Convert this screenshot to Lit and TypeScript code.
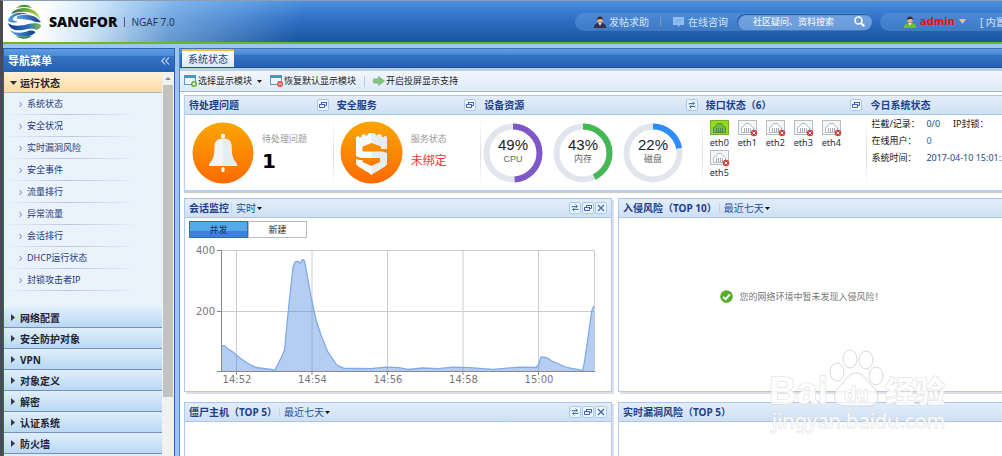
import { LitElement, html, css, svg, nothing } from "lit";
import { customElement, property, state } from "lit/decorators.js";
import { classMap } from "lit/directives/class-map.js";

const FONT = css`"Noto Sans", "Noto Sans CJK SC", sans-serif`;

const controls = css`
  * { box-sizing: border-box; }
  button, input {
    font: inherit; color: inherit; border: 0; padding: 0; margin: 0; background: none;
  }
  button { cursor: pointer; white-space: nowrap; }
  svg { display: block; flex: none; }
`;

const caret = html`<svg width="5" height="3" viewBox="0 0 5 3"><path d="M0 0h5L2.500 3z" fill="currentColor" /></svg>`;

const toolGlyphs = {
  refresh: svg`<path d="M3 5.500V4.500h5M6.500 2.500l2 2-2 1.500M9 6.500v1H4M5.500 6l-2 1.500 2 2" fill="none" stroke="#3a78b8" />`,
  restore: svg`<path d="M4.500 5V3.500h5v3H8M2.500 5.500h5v3h-5z" fill="none" stroke="#4463bd" /><path d="M4 3h6v1H4zM2 5h6v1H2z" fill="#4463bd" />`,
  close: svg`<path d="M3 3l6 6M9 3l-6 6" fill="none" stroke="#3d6ab8" stroke-width="1.400" />`,
};
const toolNames = { refresh: "刷新", restore: "还原", close: "关闭" };
type Tool = keyof typeof toolGlyphs;

@customElement("panel-head")
class PanelHead extends LitElement {
  @property() title = "";
  @property() range = "";
  @property({ attribute: false }) tools: Tool[] = [];

  static styles = [controls, css`
    :host {
      display: flex; align-items: center; height: 20px; padding: 0 4px;
      font: 10px/16px ${FONT}; color: #24509c;
      background: linear-gradient(#e3edf8, #cfe0f4);
      border-top: 1px solid #a9c6ee; border-bottom: 1px solid #a9c6ee;
    }
    h2 { margin: 0; font-size: 10px; font-weight: 700; color: #1d3f8c; white-space: nowrap; }
    .range { display: flex; align-items: center; gap: 1px; margin-left: 2px; padding-left: 4px; border-left: 1px solid #bfd5f2; line-height: 10px; }
    .range svg { color: #111; }
    .tools { display: flex; gap: 1px; margin-left: auto; }
    .tool { display: grid; border: 1px solid #a9caee; border-radius: 2px; background: #eef6fe; }
  `];

  render() {
    return html`
      <h2>${this.title}</h2>
      ${this.range ? html`<button class="range">${this.range}${caret}</button>` : nothing}
      <div class="tools">
        ${this.tools.map((t) => html`<button class="tool" aria-label=${toolNames[t]}>
          <svg width="10" height="10" viewBox="1 1 10 10">${toolGlyphs[t]}</svg></button>`)}
      </div>`;
  }
}

@customElement("ring-gauge")
class RingGauge extends LitElement {
  @property({ type: Number }) value = 0;
  @property() label = "";
  @property() color = "";

  static styles = css`
    :host { display: block; }
    svg { display: block; }
    .value { font: 15px "Liberation Sans", sans-serif; fill: #222; }
    .label { font: 9px "Liberation Sans", "Noto Sans CJK SC", sans-serif; fill: #666; }
  `;

  render() {
    return html`<svg width="60" height="60" viewBox="0 0 60 60" role="img" aria-label="${this.label} ${this.value}%">
      <circle cx="30" cy="30" r="26.500" fill="none" stroke="#e1e5ee" stroke-width="6" />
      <circle cx="30" cy="30" r="26.500" fill="none" stroke=${this.color} stroke-width="6"
        pathLength="100" stroke-dasharray="${this.value} 100" transform="rotate(-90 30 30)" />
      <text class="value" x="30" y="27" text-anchor="middle">${this.value}%</text>
      <text class="label" x="30" y="39" text-anchor="middle">${this.label}</text>
    </svg>`;
  }
}

const SESSIONS: [number, number][] = [
  [0, 96], [4, 96], [7, 99], [12, 102], [19, 108], [27, 113.500], [35, 117.500], [54, 120], [61, 106], [63.500, 100],
  [67.700, 56.700], [72, 17], [74, 12], [76.700, 11.300], [79, 13], [81.500, 9.800], [83, 10], [84, 13.500], [90, 46.700], [95, 70],
  [100, 85], [106.700, 101.700], [115.700, 115], [123, 118.300], [137, 118.500], [150, 118.700], [165, 117.200], [178, 117.700],
  [187, 119.500], [202, 118], [217, 118.700], [232, 117.200], [249, 117.700], [272, 119.300], [289, 117.900], [299, 117.200],
  [315, 117.500], [318, 114], [320, 107], [325.700, 107.700], [331, 111], [345.700, 117.500], [361.700, 120.500], [363.300, 113],
  [367.700, 83], [370.700, 61], [373, 56],
];
const TIMES = ["14:52", "14:54", "14:56", "14:58", "15:00"];

@customElement("session-chart")
class SessionChart extends LitElement {
  static styles = css`
    :host { display: block; }
    svg { display: block; width: 100%; height: auto; }
    text { font: 10px "DejaVu Sans", sans-serif; fill: #777; }
    .grid { stroke: #ccc; fill: none; }
    .axis { stroke: #888; fill: none; }
    .line { stroke: #7fabeb; fill: none; stroke-width: 1.300; }
    .area { fill: #4682dc; fill-opacity: .4; }
  `;

  render() {
    const line = "M" + SESSIONS.map((p) => p.join(" ")).join("L");
    return html`<svg viewBox="0 0 426 150" role="img" aria-label="会话监控">
      <g transform="translate(36 9)">
        <path class="grid" d="M0 .5H373.500V121M0 61.500H373" />
        ${TIMES.map((t, i) => svg`<path class="grid" d="M${15.5 + i * 75.5} 0V121" />`)}
        <path class="area" d="${line}V121H0Z" />
        <path class="line" d=${line} />
        <path class="axis" d="M.5 0V121M-4 121.500H374M-4 .5H0M-4 61.500H0" />
        ${TIMES.map((t, i) => svg`<path class="axis" d="M${15.5 + i * 75.5} 121v4" />
          <text x=${16 + i * 75.5} y="133" text-anchor="middle">${t}</text>`)}
        <text x="-6" y="4" text-anchor="end">400</text>
        <text x="-6" y="65" text-anchor="end">200</text>
      </g>
    </svg>`;
  }
}

const SUBMENU = ["系统状态", "安全状况", "实时漏洞风险", "安全事件", "流量排行", "异常流量", "会话排行", "DHCP运行状态", "封锁攻击者IP"];
const SECTIONS = ["网络配置", "安全防护对象", "VPN", "对象定义", "解密", "认证系统", "防火墙", "系统"];

@customElement("side-nav")
class SideNav extends LitElement {
  static styles = [controls, css`
    :host {
      display: flex; flex-direction: column; min-height: 0; overflow: hidden;
      font: 9px/14px ${FONT}; color: #1c3a80; background: #eaf2fc;
      border: 1px solid #2a5fae; border-bottom: 0;
    }
    .title {
      display: flex; align-items: center; justify-content: space-between; flex: none;
      height: 23px; padding: 0 4px; color: #fff; font-size: 11px; font-weight: 700;
      background: linear-gradient(#5e9de2, #4a8ad6 30%, #3673c4 32%, #2660b4);
    }
    .body { display: flex; flex: 1; min-height: 0; }
    .menu { flex: 1; min-width: 0; overflow: hidden; }
    .section {
      display: flex; align-items: center; gap: 5px; width: 100%; height: 21px; padding: 1px 0 0 7px;
      font-size: 10px; font-weight: 700; color: #223; text-align: left;
      background: linear-gradient(#e0effb, #b9d8f3); border-bottom: 1px solid #7590bd;
    }
    .section.open { background: linear-gradient(#fff0d8, #fdd9a4); border-bottom-color: #aab8cc; gap: 3px; padding-left: 6px; }
    ul { list-style: none; margin: 0; padding: 0 0 16px; }
    li { height: 22px; background: linear-gradient(90deg, transparent, #b8c8dc 40%, transparent 85%) bottom / 100% 1px no-repeat; }
    a { display: flex; align-items: center; gap: 4px; height: 22px; padding-left: 15px; color: inherit; text-decoration: none; }
    .scroll { flex: none; width: 12px; background: #f1f1f1; padding: 0 1px; }
    .up { display: grid; place-items: center; width: 10px; height: 13px; }
    .thumb { height: 81%; background: #c1c2c2; }
  `];

  render() {
    return html`
      <div class="title">导航菜单
        <button aria-label="收起"><svg width="9" height="8" viewBox="0 0 9 8"><path d="M4 .5L.8 4 4 7.500M8 .5L4.800 4 8 7.500" fill="none" stroke="#d5e6fb" stroke-width="1.100" /></svg></button>
      </div>
      <div class="body">
        <nav class="menu">
          <button class="section open"><svg width="7" height="4" viewBox="0 0 7 4"><path d="M0 0h7L3.500 4z" fill="#333" /></svg>运行状态</button>
          <ul>${SUBMENU.map((s) => html`<li><a href="#"><svg width="4" height="7" viewBox="0 0 4 7"><path d="M.5 1l2 2.500-2 2.500" fill="none" stroke="#8aa6cc" stroke-width="1.200" /></svg>${s}</a></li>`)}</ul>
          ${SECTIONS.map((s) => html`<button class="section"><svg width="4" height="7" viewBox="0 0 4 7"><path d="M0 0l4 3.500L0 7z" fill="#333a48" /></svg>${s}</button>`)}
        </nav>
        <div class="scroll">
          <div class="up"><svg width="6" height="3" viewBox="0 0 6 3"><path d="M0 3h6L3 0z" fill="#8a8a8a" /></svg></div>
          <div class="thumb"></div>
        </div>
      </div>`;
  }
}

const person = (coat: string) => html`<svg width="12" height="12" viewBox="0 0 12 12">
  <path d="M0 12c0-4 2-5 6-5s6 1 6 5z" fill=${coat} /><path d="M4.500 7h3L6 10z" fill="#f3e7e0" />
  <circle cx="6" cy="4" r="2.800" fill="#e8b08a" /><path d="M3 4C2.700-.8 9.300-.8 9 4 8 2.500 5 2.500 3 4z" fill="#3d2a22" /></svg>`;

const windowIcon = (color: string, plus: boolean) => html`<svg width="13" height="12" viewBox="0 0 13 12">
  <rect x=".5" y=".5" width="11" height="9" fill="#eaf5fc" stroke="#5a9cc8" /><path d="M0 0h12v3H0z" fill="#3d9ad0" />
  <circle cx="10" cy="9" r="3" fill=${color} /><path d=${plus ? "M8.300 9h3.400M10 7.300v3.400" : "M8.300 9h3.400"} stroke="#fff" /></svg>`;

const ethIcon = (up: boolean) => html`<svg width="20" height="17" viewBox="0 0 20 17">
  <rect x=".5" y=".5" width="18" height="14" fill=${up ? "#8fe010" : "#f4f6f8"} stroke=${up ? "#7da838" : "#b4bcc4"} />
  <path d="M3.500 12.500v-5l2-1L7.500 3.500h4l2 3 2 1v5z" fill=${up ? "#78b850" : "#fff"} stroke=${up ? "#4c8c40" : "#b2bac2"} />
  <path d="M6.500 8v4M8.500 8v4M10.500 8v4M12.500 8v4" stroke=${up ? "#4e8a44" : "#a6aeb8"} />
  ${up ? nothing : svg`<circle cx="16" cy="13" r="3.200" fill="#dc3c3c" /><path d="M14.700 11.700l2.600 2.600M17.300 11.700l-2.600 2.600" stroke="#fff" />`}</svg>`;

@customElement("app-root")
class AppRoot extends LitElement {
  @state() private mode = "并发";

  static styles = [controls, css`
    :host {
      display: flex; flex-direction: column; height: 100vh; overflow: hidden; position: relative;
      font: 9px/14px ${FONT}; color: #222; background: #9cc5ef;
      border-top: 1px solid #8d9db3; border-left: 3px solid #4a4b50;
    }
    header {
      display: flex; align-items: center; flex: none; height: 43px; color: #d6e6fa;
      background:
        linear-gradient(100deg, #fff 4%, rgba(225, 242, 253, .9) 9%, rgba(170, 212, 245, .55) 17%, rgba(90, 150, 220, 0) 30%),
        linear-gradient(#4a90e0, #2f6fc4 45%, #19549e);
      border-bottom: 2px solid #6db52c;
    }
    .brand { display: flex; align-items: center; flex: 1; padding-left: 4px; gap: 7px; }
    .brand strong { font: 800 14px/20px "Open Sans", sans-serif; color: #0a0a0a; }
    .brand span { padding-left: 6px; border-left: 1px solid #557; font-size: 10px; line-height: 10px; color: #223a5c; }
    .pill { display: flex; align-items: center; height: 18px; border-radius: 9px; background: rgba(120, 175, 235, .32); }
    .help { padding-left: 19px; font-size: 10px; }
    .help button { display: flex; align-items: center; gap: 3px; }
    .sep { width: 1px; height: 9px; margin: 0 11px; background: #8a98b0; }
    .search { display: flex; align-items: center; width: 135px; height: 16px; margin-left: 9px; padding-right: 7px; border-radius: 8px; background: rgba(150, 190, 235, .5); box-shadow: inset 1px 1px 1px #1c529c; }
    .search input { flex: 1; min-width: 0; padding-left: 16px; font-size: 9px; line-height: 14px; color: #fff; outline: 0; }
    .search input::placeholder { color: #fff; opacity: 1; }
    .account { flex: none; width: 122px; margin-left: 8px; padding-left: 24px; border-radius: 9px 0 0 9px; overflow: hidden; white-space: nowrap; font-size: 10px; }
    .user { display: flex; align-items: center; gap: 4px; margin-right: 14px; font: 700 10px/14px "DejaVu Sans", sans-serif; color: #f01010; }

    .shell { display: grid; grid-template-columns: 172px minmax(0, 1fr); gap: 4px; flex: 1; min-height: 0; padding-top: 4px; }
    main { display: flex; flex-direction: column; min-width: 0; overflow: hidden; background: #fff; border-left: 1px solid #5580b8; }
    .tabs { display: flex; align-items: flex-end; flex: none; height: 20px; padding-left: 2px; border-top: 1px solid #3d70b8; background: linear-gradient(#5e9de2, #4a8ad6 30%, #3673c4 32%, #2660b4); border-bottom: 1px solid #1f4f9c; }
    .tab { height: 18px; padding: 0 6px; font-size: 10px; color: #1d3f8c; background: linear-gradient(#fff, #dbe8f6); border-top: 2px solid #f4b942; border-radius: 1px 1px 0 0; }
    .toolbar { display: flex; align-items: center; gap: 8px; flex: none; height: 24px; padding: 0 4px; border-top: 3px solid #b9cfe8; border-bottom: 1px solid #9db9da; background: linear-gradient(#f3f5fd, #dcebf8); }
    .toolbar button { display: flex; align-items: center; gap: 1px; }
    .toolbar button .more { margin-left: 4px; }
    .toolbar i { width: 1px; height: 11px; background: #b5cdec; }

    .dash { flex: 1; min-width: 870px; padding: 3px 4px 0; overflow: hidden; }
    .summary { display: grid; grid-template-columns: 148fr 148fr 222fr 165fr 179fr; height: 97px; margin-bottom: 6px; border: 1px solid #b8d0f0; border-top: 0; border-bottom: 2px solid #bacfec; box-shadow: 0 1px 1px #ccc; }
    .cell { display: flex; flex-direction: column; min-width: 0; }
    .cell + .cell .content { background: linear-gradient(transparent, #ddd 50%, transparent) left / 1px 70px no-repeat; }
    .content { display: flex; align-items: center; flex: 1; min-height: 0; }
    .big { gap: 8px; padding-left: 7px; }
    .big p { margin: 0; color: #999; line-height: 12px; }
    .big strong { display: block; margin-top: 4px; font: 700 20px/24px "DejaVu Sans", sans-serif; color: #000; }
    .big .warn { margin-top: 4px; font-size: 12px; line-height: 24px; color: #ff3535; }
    .rings { gap: 10px; padding-left: 3px; }
    .ports { display: grid; grid-template-columns: repeat(5, 28px); align-content: start; align-items: start; row-gap: 2px; padding: 5px 0 0 8px; color: #2a2a4a; }
    .port { display: flex; flex-direction: column; line-height: 11px; }
    dl.content { display: grid; grid-template-columns: 55px auto; align-content: start; margin: 0; padding: 0 0 0 5px; line-height: 17px; white-space: nowrap; color: #111; }
    dd { display: flex; gap: 13px; margin: 0; color: #244a80; }
    dd span { color: #111; }
    dd a { color: #2a62d8; text-decoration: none; }

    .row { display: grid; grid-template-columns: 1fr 1fr; gap: 6px; margin-bottom: 10px; }
    .panel { min-height: 194px; background: #fff; border: 1px solid #b0c9ee; border-top: 0; box-shadow: 2px 2px 0 #dde1e6; display: flex; flex-direction: column; }
    .switch { display: flex; width: 118px; height: 17px; margin: 3px 0 3px 4px; }
    .switch button { flex: 1; border: 1px solid #b8bcc4; background: #fff; }
    .switch .on { border-color: #2f6cc0; background: linear-gradient(#55aaea 60%, #3f80dc 62%); color: #15335c; }
    .empty { display: flex; align-items: center; justify-content: center; gap: 6px; flex: 1; margin: 0; padding-bottom: 16px; padding-right: 60px; color: #777; }
    .mark { position: absolute; right: 50px; bottom: 16px; pointer-events: none; }
    .mark text { fill: #fff; fill-opacity: .85; stroke: #dcdcdc; paint-order: stroke; }
    .mark .latin { font: 700 38px "Liberation Sans", sans-serif; }
    .mark .inner { font: 700 20px "Liberation Sans", sans-serif; }
    .mark .han { font: 900 30px "Noto Sans CJK SC", sans-serif; }
    .mark .url { font: 20px "Noto Sans", sans-serif; }
  `];

  render() {
    return html`
      <header>
        <div class="brand">
          <svg width="35" height="35" viewBox="0 0 35 35" aria-hidden="true">
            <defs>
              <linearGradient id="g" x1="0" x2="1"><stop offset="0" stop-color="#1a7a3c" /><stop offset="1" stop-color="#b4d63a" /></linearGradient>
              <linearGradient id="b" x1="0" x2="1"><stop offset="0" stop-color="#5aa8e4" /><stop offset="1" stop-color="#123a8c" /></linearGradient>
              <linearGradient id="d" x1="0" x2="1"><stop offset="0" stop-color="#123a8c" /><stop offset=".6" stop-color="#2a6cc0" /><stop offset="1" stop-color="#7cc040" /></linearGradient>
            </defs>
            <path d="M9 4C14-.5 21-.5 25 4 20 2.500 14 2.500 9 4z" fill="#3f9a3a" />
            <path d="M4 10C9 3 22 2 29 8c2 2 4 5 4 8C28 7 15 6 4 10z" fill="url(#g)" />
            <path d="M1 16c2-6 11-9 19-6-7-.5-12 1.500-14 4-1 2 1 3 5 4-5 1-10 1-10-2z" fill="url(#b)" />
            <path d="M10 12c9-3 19-1 24 6-5 1-7-1-11-2-5-1-9-1-13-1z" fill="url(#b)" />
            <path d="M1 19c5 4 14 3 20 1 6-1 11-1 13 1 0 3-2 4-5 5-3-2-8-1-13 0-7 1-13 0-15-7z" fill="url(#d)" />
            <path d="M3 26c6 4 13 3 18 1 4-1 8 0 7 2-6 5-19 6-25-3z" fill="url(#b)" />
            <path d="M9 32c6 1.500 11 .5 16-.5-4 4-11 4.500-16 .5z" fill="#2a8c3c" />
          </svg>
          <strong>SANGFOR</strong><span>NGAF 7.0</span>
        </div>
        <div class="pill help">
          <button>${person("#3a2f4c")}发帖求助</button>
          <span class="sep"></span>
          <button><svg width="13" height="12" viewBox="0 0 13 12"><path d="M1 1h11v8H8l-2 2.500V9H1z" fill="#8fbdf2" /><path d="M3 4h7M3 6h5" stroke="#7aabe8" /></svg>在线咨询</button>
          <label class="search"><input aria-label="搜索" placeholder="社区疑问、资料搜索" />
            <svg width="11" height="11" viewBox="0 0 11 11"><circle cx="4.500" cy="4.500" r="3.500" fill="none" stroke="#fff" stroke-width="1.600" /><path d="M7 7l3.300 3.300" stroke="#fff" stroke-width="2" /></svg></label>
        </div>
        <div class="pill account">
          <button class="user">${person("#6cc02c")}admin<svg width="7" height="5" viewBox="0 0 7 5"><path d="M0 0h7L3.500 5z" fill="#f3c47c" /></svg></button>
          <span>[ 内置数据中心 ]</span>
        </div>
      </header>

      <div class="shell">
        <side-nav></side-nav>
        <main>
          <div class="tabs"><button class="tab">系统状态</button></div>
          <div class="toolbar">
            <button>${windowIcon("#5cae2c", true)}选择显示模块<span class="more">${caret}</span></button>
            <button>${windowIcon("#e05548", false)}恢复默认显示模块</button>
            <i></i>
            <button><svg width="12" height="10" viewBox="0 0 12 10"><path d="M.5 3h5V.5L11.500 5l-6 4.500V7h-5z" fill="#7cc87c" stroke="#8fb58f" /></svg>开启投屏显示支持</button>
          </div>

          <div class="dash">
            <section class="summary">
              <div class="cell">
                <panel-head title="待处理问题" .tools=${["restore"]}></panel-head>
                <div class="content big">
                  <svg width="62" height="62" viewBox="0 0 62 62"><defs><linearGradient id="o" x2="0" y2="1"><stop offset="0" stop-color="#fba600" /><stop offset="1" stop-color="#fd6a02" /></linearGradient></defs>
                    <circle cx="31" cy="31" r="30.500" fill="url(#o)" />
                    <circle cx="31" cy="14" r="2.200" fill="#fff" />
                    <path d="M31 16.500c6 0 8.500 3 8.500 8 0 8 1 13 5.500 17.500v2H17v-2c4.500-4.500 5.500-9.500 5.500-17.500 0-5 2.500-8 8.500-8z" fill="#f1f5f7" />
                    <path d="M31 16.500c6 0 8.500 3 8.500 8 0 8 1 13 5.500 17.500v2H31z" fill="#e6edf0" />
                    <rect x="29.500" y="45" width="3" height="5" rx="1.500" fill="#fff" /></svg>
                  <div><p>待处理问题</p><strong>1</strong></div>
                </div>
              </div>
              <div class="cell">
                <panel-head title="安全服务" .tools=${["restore"]}></panel-head>
                <div class="content big">
                  <svg width="63" height="63" viewBox="0 0 63 63"><defs><linearGradient id="p" x2="0" y2="63" gradientUnits="userSpaceOnUse"><stop offset="0" stop-color="#fba600" /><stop offset="1" stop-color="#fd6a02" /></linearGradient></defs>
                    <circle cx="31.500" cy="31.500" r="31" fill="url(#p)" />
                    <path d="M16 16l2.500-1 1 1.500 2-.7V14l3-1 1 1.800 2-.5.500-1.800L31.500 12l3.500.5.500 1.800 2 .5 1-1.800 3 1v1.800l2 .7 1-1.500 2.500 1V43c-4 5-10 6-15.500 11C26 49 20 48 16 43z" fill="#f9fbfc" />
                    <path d="M31.500 12l3.500.5.500 1.800 2 .5 1-1.800 3 1v1.800l2 .7 1-1.500 2.500 1V43c-4 5-10 6-15.500 11z" fill="#e6edf0" />
                    <path d="M22.500 25.500l9-3.500 9.500 3.500V28h7v4.500c-2-1-4-2-7-2H22.500z" fill="url(#p)" />
                    <path d="M15 34.500c2 1.500 5 2.500 8 2.500h17v4l-8.500 4-9-4v-2c-3 0-5.500-.5-7.500-1.500z" fill="url(#p)" /></svg>
                  <div><p>服务状态</p><p class="warn">未绑定</p></div>
                </div>
              </div>
              <div class="cell">
                <panel-head title="设备资源" .tools=${["refresh"]}></panel-head>
                <div class="content rings">
                  <ring-gauge value="49" label="CPU" color="#7e57c8"></ring-gauge>
                  <ring-gauge value="43" label="内存" color="#43b853"></ring-gauge>
                  <ring-gauge value="22" label="磁盘" color="#2f8cff"></ring-gauge>
                </div>
              </div>
              <div class="cell">
                <panel-head title="接口状态（6）" .tools=${["restore"]}></panel-head>
                <div class="content ports">
                  ${[0, 1, 2, 3, 4, 5].map((n) => html`<div class="port">${ethIcon(n === 0)}<span>eth${n}</span></div>`)}
                </div>
              </div>
              <div class="cell">
                <panel-head title="今日系统状态"></panel-head>
                <dl class="content">
                  <dt>拦截/记录：</dt><dd>0/0<span>IP封锁：</span></dd>
                  <dt>在线用户：</dt><dd><a href="#">0</a></dd>
                  <dt>系统时间：</dt><dd>2017-04-10 15:01:32</dd>
                </dl>
              </div>
            </section>

            <div class="row">
              <section class="panel">
                <panel-head title="会话监控" range="实时" .tools=${["refresh", "restore", "close"]}></panel-head>
                <div class="switch">
                  ${["并发", "新建"].map((m) => html`<button class=${classMap({ on: this.mode === m })} @click=${() => (this.mode = m)}>${m}</button>`)}
                </div>
                <session-chart></session-chart>
              </section>
              <section class="panel">
                <panel-head title="入侵风险（TOP 10）" range="最近七天" .tools=${["refresh", "restore", "close"]}></panel-head>
                <p class="empty"><svg width="13" height="13" viewBox="0 0 13 13"><circle cx="6.500" cy="6.500" r="6.300" fill="#58ad2c" /><path d="M3.200 6.800l2.400 2.400 4.400-4.800" fill="none" stroke="#fff" stroke-width="1.800" /></svg>您的网络环境中暂未发现入侵风险！</p>
              </section>
            </div>
            <div class="row">
              <section class="panel"><panel-head title="僵尸主机（TOP 5）" range="最近七天" .tools=${["refresh", "restore", "close"]}></panel-head></section>
              <section class="panel"><panel-head title="实时漏洞风险（TOP 5）" .tools=${["refresh", "restore", "close"]}></panel-head></section>
            </div>
          </div>
        </main>
      </div>

      <svg class="mark" width="184" height="92" viewBox="0 0 184 92" aria-hidden="true">
        <g fill="#fff" fill-opacity=".75" stroke="#d8d8d8">
          <ellipse cx="69" cy="23" rx="7" ry="9" /><ellipse cx="82" cy="10" rx="7" ry="9" />
          <ellipse cx="98" cy="11" rx="7" ry="9" /><ellipse cx="108" cy="27" rx="7" ry="9" />
          <path d="M88 24c8 0 10 8 16 13 8 6 9 20-3 20H77c-13 0-13-13-5-20 6-5 8-13 16-13z" />
        </g>
        <text class="latin" x="1" y="55">Bai</text>
        <text class="inner" x="76" y="52">du</text>
        <text class="han" x="117" y="53">经验</text>
        <text class="url" x="4" y="79">jingyan.baidu.com</text>
      </svg>`;
  }
}
